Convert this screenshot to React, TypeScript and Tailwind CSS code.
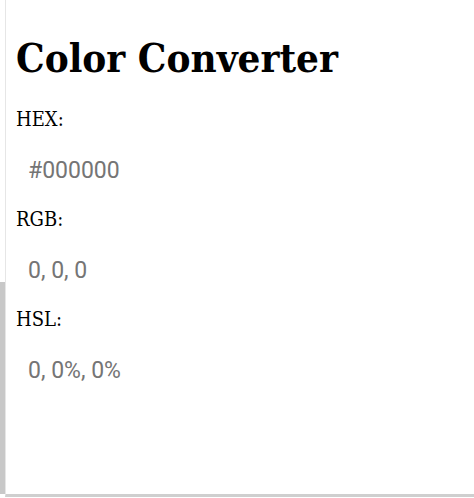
export default function App() {
  const fields = [
    { label: "HEX:", value: "#000000" },
    { label: "RGB:", value: "0, 0, 0" },
    { label: "HSL:", value: "0, 0%, 0%" },
  ];

  return (
    <div className="w-[474px] h-[498px] bg-white flex">
      <div className="w-[5px] flex flex-col">
        <div className="h-[282px]" />
        <div className="h-[212px] bg-[#c8c8c8]" />
      </div>
      <div className="flex-1 h-[497px] border-l border-l-[#e6e6e6] border-b-[3px] border-b-[#cfcfcf] pl-[10px] pt-[34px] font-['DejaVu_Serif_Condensed','DejaVu_Serif',serif]">
        <h1 className="text-[40px] leading-[48px] font-bold text-black">Color Converter</h1>
        <div className="mt-[25px] flex flex-col">
          {fields.map((f) => (
            <div key={f.label} className="flex flex-col h-[100px]">
              <label className="text-[20px] leading-[24px] text-black">{f.label}</label>
              <input
                readOnly
                placeholder={f.value}
                className="mt-[19px] w-[220px] h-[40px] px-[12px] text-[23px] font-['Roboto',sans-serif] text-[#757575] placeholder:text-[#757575] outline-none"
              />
            </div>
          ))}
        </div>
      </div>
    </div>
  );
}
